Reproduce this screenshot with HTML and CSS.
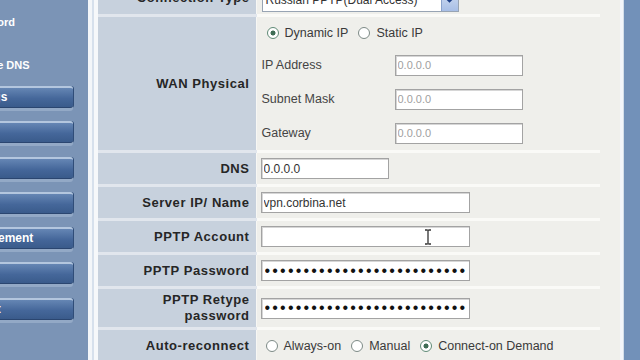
FILE: index.html
```html
<!DOCTYPE html>
<html>
<head>
<meta charset="utf-8">
<link rel="stylesheet" href="styles.css">
</head>
<body>
<div class="page">
  <aside class="sidebar">
    <div class="side-inner">
      <a class="side-link">Time</a>
      <a class="side-link">Password</a>
      <a class="side-link">QoS</a>
      <a class="side-link">Update DNS</a>
      <a class="side-btn">Settings</a>
      <a class="side-btn">Status</a>
      <a class="side-btn">WAN</a>
      <a class="side-btn">LAN</a>
      <a class="side-btn">Management</a>
      <a class="side-btn">Tools</a>
      <a class="side-btn">Logout</a>
    </div>
  </aside>
  <div class="gutter"></div>
  <main class="main">
    <table class="form">
      <tr class="r-first">
        <td class="lbl">Connection Type</td>
        <td class="val">
          <div class="select"><span class="sel-text">Russian PPTP(Dual Access)</span><span class="sel-arrow"><svg width="9" height="6" viewBox="0 0 9 6"><path d="M1 1 L4.5 4.5 L8 1" fill="none" stroke="#1d3f86" stroke-width="1.8"/></svg></span></div>
        </td>
      </tr>
      <tr class="r-wan">
        <td class="lbl">WAN Physical</td>
        <td class="val val-wan">
          <table class="nested">
            <tr class="n-radio">
              <td colspan="2"><span class="radio on"></span><span class="rtext">Dynamic IP</span><span class="radio"></span><span class="rtext">Static IP</span></td>
            </tr>
            <tr class="n-row"><td class="n-lbl">IP Address</td><td><input class="inp inp-s dim" value="0.0.0.0"></td></tr>
            <tr class="n-row"><td class="n-lbl">Subnet Mask</td><td><input class="inp inp-s dim" value="0.0.0.0"></td></tr>
            <tr class="n-row"><td class="n-lbl">Gateway</td><td><input class="inp inp-s dim" value="0.0.0.0"></td></tr>
          </table>
        </td>
      </tr>
      <tr class="r-std">
        <td class="lbl">DNS</td>
        <td class="val"><input class="inp inp-s" value="0.0.0.0"></td>
      </tr>
      <tr class="r-std">
        <td class="lbl">Server IP/ Name</td>
        <td class="val"><input class="inp inp-l" value="vpn.corbina.net"></td>
      </tr>
      <tr class="r-std">
        <td class="lbl">PPTP Account</td>
        <td class="val">
          <div class="acct"><input class="inp inp-l" value=""><svg class="ibeam" width="8" height="16" viewBox="0 0 8 16"><path d="M1 1 H3 Q4 1.5 5 1 H7 M4 1.5 V14.5 M1 15 H3 Q4 14.5 5 15 H7" fill="none" stroke="#333" stroke-width="1.3"/></svg></div>
        </td>
      </tr>
      <tr class="r-std">
        <td class="lbl">PPTP Password</td>
        <td class="val"><input class="inp inp-l pw" type="password" value="abcdefghijklmnopqrstuvwxyz"></td>
      </tr>
      <tr class="r-tall">
        <td class="lbl">PPTP Retype<br>password</td>
        <td class="val"><input class="inp inp-l pw" type="password" value="abcdefghijklmnopqrstuvwxyz"></td>
      </tr>
      <tr class="r-std">
        <td class="lbl">Auto-reconnect</td>
        <td class="val"><span class="radio"></span><span class="rtext">Always-on</span><span class="radio"></span><span class="rtext">Manual</span><span class="radio on"></span><span class="rtext">Connect-on Demand</span></td>
      </tr>
    </table>
  </main>
  <div class="rail-edge"></div>
  <div class="rail"></div>
</div>
</body>
</html>
```
FILE: styles.css
```css
html, body {
  margin: 0;
  padding: 0;
}
body {
  width: 640px;
  height: 360px;
  overflow: hidden;
  font-family: "Liberation Sans", Arial, sans-serif;
}
.page {
  display: flex;
  width: 640px;
  height: 360px;
  overflow: hidden;
}
.sidebar {
  width: 88px;
  flex: none;
  background: #7b94b6;
  overflow: hidden;
}
.side-inner {
  margin-left: -37px;
  width: 110px;
  margin-top: -10px;
}
.side-link {
  display: block;
  height: 21.5px;
  line-height: 21.5px;
  color: #fff;
  font-size: 11px;
  font-weight: bold;
  white-space: nowrap;
}
.side-link:nth-child(4) {
  text-indent: 3px;
}
.side-btn {
  display: block;
  box-sizing: border-box;
  height: 22px;
  margin-top: 13.3px;
  padding-left: 0;
  line-height: 19px;
  color: #fff;
  font-size: 12px;
  font-weight: bold;
  white-space: nowrap;
  border-top: 2px solid #b3c6de;
  border-bottom: 1px solid #2b4670;
  border-radius: 0 3px 3px 0;
  background: linear-gradient(#6586b4, #45679a 55%, #3a5b8b);
  box-shadow: 0 3px 0 #93a9c6, 1px 0 0 #304d78;
  text-indent: -3px;
}
.side-link + .side-btn {
  margin-top: 10px;
}
.gutter {
  width: 10px;
  flex: none;
  background: #f3f6f9;
  box-shadow: inset -4px 0 0 #f6f8fa, inset -6px 0 0 #d6e0ec;
}
.main {
  width: 522px;
  flex: none;
  background: #f0f0ec;
}
.rail-edge {
  width: 4px;
  flex: none;
  background: #f3f6fa;
  box-shadow: inset -1px 0 0 #d3deea;
}
.rail {
  flex: 1;
  background: #7291b9;
}
.form {
  width: 502px;
  border-collapse: collapse;
  margin-top: -19px;
  table-layout: fixed;
}
.form > tbody > tr > td {
  padding: 0;
  vertical-align: middle;
}
.lbl {
  width: 158px;
  box-sizing: border-box;
  background: #c7d1dd;
  border-bottom: 3px solid #e1e6ed;
  text-align: right;
  padding-right: 6px !important;
  font-size: 13px;
  font-weight: bold;
  letter-spacing: 0.55px;
  color: #262626;
  line-height: 16px;
}
.val {
  background: #efefeb;
  border-bottom: 3px solid #fafaf7;
  border-left: 1px solid #f7f7f4;
  padding-left: 4px !important;
  font-size: 12.5px;
  color: #3a3a3a;
}
.r-first > td { height: 33px; }
.r-std > td { height: 31px; }
.r-tall > td { height: 38px; }
.r-wan > td { height: 133px; }
.val-wan { padding-left: 5px !important; }

.select {
  display: flex;
  box-sizing: border-box;
  width: 197px;
  height: 23px;
  margin-left: 1px;
  margin-top: 5px;
  border: 1px solid #98a4b3;
  background: #fff;
  align-items: center;
}
.sel-text {
  flex: 1;
  padding-left: 3px;
  font-size: 12px;
  color: #333;
  white-space: nowrap;
  overflow: hidden;
}
.sel-arrow {
  width: 16px;
  height: 21px;
  display: flex;
  align-items: center;
  justify-content: center;
  background: linear-gradient(#d2def2, #a8bfe6);
  border-left: 1px solid #8aa2cc;
}

.nested {
  border-collapse: collapse;
  width: 262px;
}
.nested td {
  padding: 0;
  vertical-align: middle;
}
.n-radio td { height: 31px; }
.n-row td { height: 34px; }
.n-lbl {
  width: 133px;
  font-size: 12.5px;
  color: #444;
}

.radio {
  display: inline-block;
  box-sizing: border-box;
  width: 12px;
  height: 12px;
  border-radius: 50%;
  border: 1px solid #7d8a86;
  background: #fff;
  vertical-align: -2px;
  margin-left: 5px;
  margin-right: 6px;
}
.radio.on {
  background: radial-gradient(circle, #3f6d55 0 2.2px, #fff 2.8px);
  border-color: #5f8a76;
}
.rtext {
  margin-right: 5px;
}

.inp {
  box-sizing: border-box;
  height: 21px;
  border: 1px solid #a3a3a3;
  box-shadow: inset 1px 1px 0 #d6d6d6;
  background: #fff;
  font-family: "Liberation Sans", Arial, sans-serif;
  font-size: 12px;
  color: #333;
  padding: 0 2px;
  margin: 0;
  outline: none;
  vertical-align: middle;
}
.inp-s { width: 128px; }
.inp-l { width: 209px; }
.dim { color: #a0a0a0; font-size: 11px; }
.pw {
  font-size: 16px;
  letter-spacing: 2.2px;
  color: #111;
  padding-left: 3px;
}
.acct {
  position: relative;
  width: 209px;
  height: 21px;
}
.ibeam {
  position: absolute;
  left: 163px;
  top: 3px;
}
```
